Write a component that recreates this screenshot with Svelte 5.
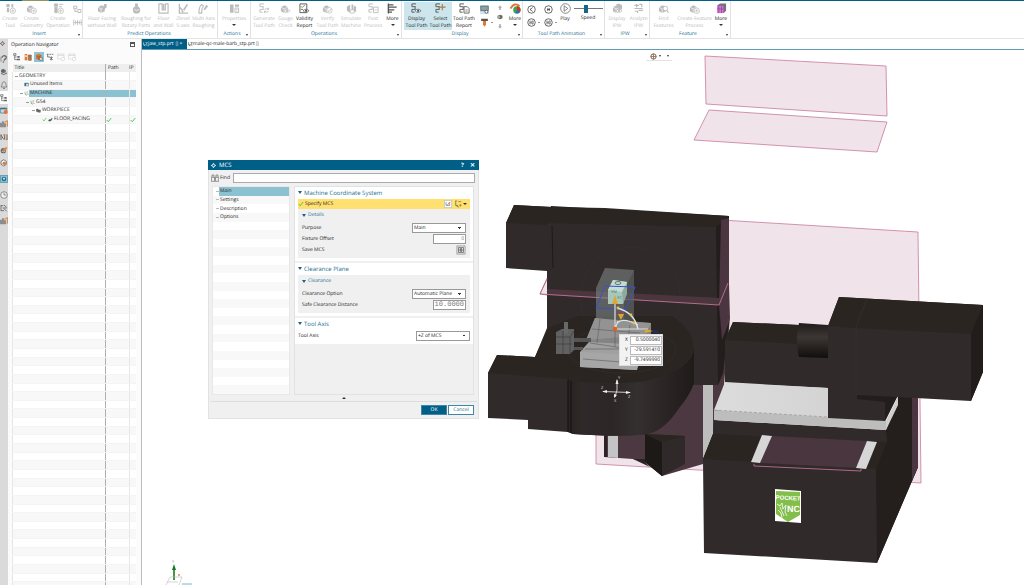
<script>
  const cube = '<path d="M2 9l8-4 7 4v9l-8 4-7-4z" fill="currentColor"/><path d="M2 9l7 4 8-4M9 13v9" fill="none" stroke="#fff" stroke-width="1.4"/>';
  const plus = '<circle cx="17" cy="17" r="6" fill="#fff" stroke="currentColor" stroke-width="1.6"/><path d="M13.500 17h7M17 13.500v7" stroke="currentColor" stroke-width="1.6"/>';
  const path = '<path d="M2 2h9M2 8h8M2 14h8M2 20h6M2 2v6M9 8v6M2 14v6" fill="none" stroke="currentColor" stroke-width="2"/>';
  const eye = '<path d="M9 17q6-7 13 0q-7 7-13 0z" fill="#fff" stroke="currentColor" stroke-width="1.600"/><circle cx="15.500" cy="17" r="2.500" fill="currentColor"/>';

  const icons = {
    tool: '<path d="M3 2h7v7H3zM4 11h5v9H4zM14 2h4v8h-4z" fill="currentColor"/>' + plus,
    geometry: cube + plus,
    operation: '<path d="M3 2h7v5H3zM4 9h5v12H4zM13 3h9M13 8h6" fill="currentColor" stroke="currentColor" stroke-width="2"/>' + plus,
    face: cube + '<path d="M12 12l4-10h5v8l-6 4z" fill="currentColor"/>',
    rough: '<path d="M9 1h6v8H9z" fill="currentColor"/><circle cx="12" cy="15" r="8" fill="currentColor"/><path d="M7 14q5 5 10 0" stroke="#fff" stroke-width="1.500" fill="none"/>',
    wall: '<path d="M2 2v20h20V2h-6v13H9V2z" fill="none" stroke="currentColor" stroke-width="2.500"/><path d="M10 2h4v12h-4z" fill="currentColor"/>',
    zlevel: '<path d="M3 2v20h19M3 9q5 3 8 11" fill="none" stroke="currentColor" stroke-width="3"/><path d="M11 14L19 2l3 2-8 13z" fill="currentColor"/>',
    multi: '<path d="M2 22q0-14 6-19l4 3q-5 7-4 16z" fill="none" stroke="currentColor" stroke-width="2.500"/><path d="M12 14l6-10 4 3-7 9z" fill="currentColor"/>',
    props: '<path d="M2 3h8v18H2zM13 3h9v5h-9z" fill="currentColor"/><path d="M13 11h8v10h-8z" fill="#fff" stroke="currentColor" stroke-width="2"/><path d="M15 14h4M15 18h4" stroke="currentColor" stroke-width="1.500"/>',
    generate: path + '<path d="M12 14q5-5 9 0M21 18q-5 5-9 0M21 10v4h-4M12 22v-4h4" fill="none" stroke="currentColor" stroke-width="1.800"/>',
    gouge: cube + eye,
    validity: '<path d="M2 2h15v19H2z" fill="#fff" stroke="currentColor" stroke-width="2"/><path d="M4 7l3 3 6-6" fill="none" stroke="#3aa655" stroke-width="2"/><path d="M4 14h5" stroke="#d03c3c" stroke-width="2"/>' + eye,
    verify: cube + '<circle cx="16" cy="16" r="6" fill="#fff" stroke="currentColor" stroke-width="1.600"/><path d="M13 16l2 3 5-6" fill="none" stroke="currentColor" stroke-width="1.800"/>',
    simulate: '<path d="M2 8l7-5v18l-7-4zM12 3h4v12h-4zM17 7h5v12h-5z" fill="currentColor"/><path d="M9 15h9v7H9z" fill="#fff" stroke="currentColor" stroke-width="1.600"/>',
    post: path + '<path d="M12 9h10v12H12z" fill="#fff" stroke="currentColor" stroke-width="2"/><path d="M14 15h6" stroke="currentColor" stroke-width="1.500"/>',
    list: '<path d="M3 1v22M3 4h11M3 9h18M3 15h13M3 20h8" fill="none" stroke="currentColor" stroke-width="3"/>',
    display: path + eye,
    select: path + '<path d="M16 2v14M9 9h14" stroke="#b07a46" stroke-width="2.400"/>',
    report: path + '<path d="M11 8h7l4 4v10H11z" fill="#fff" stroke="currentColor" stroke-width="1.800"/><path d="M14 15h5M14 18h5" stroke="currentColor" stroke-width="1.200"/>',
    color: '<path d="M1 12q9-15 20-5" fill="none" stroke="#e0762f" stroke-width="4"/><circle cx="15" cy="15" r="8" fill="#34a853"/><path d="M15 15V7a8 8 0 0 1 7 12z" fill="#d93025"/><path d="M15 15l7 4a8 8 0 0 1-10 3z" fill="#3067c8"/>',
    prev: '<circle cx="12" cy="12" r="10" fill="#fff" stroke="currentColor" stroke-width="1.800"/><path d="M15 7l-7 5 7 5" fill="none" stroke="currentColor" stroke-width="1.800"/>',
    stop: '<circle cx="12" cy="12" r="10" fill="#fff" stroke="currentColor" stroke-width="1.800"/><path d="M10 8v8M14 8v8M8 12h8" fill="none" stroke="currentColor" stroke-width="1.600"/>',
    first: '<circle cx="12" cy="12" r="10" fill="#fff" stroke="currentColor" stroke-width="1.800"/><path d="M8 7v10M16 7v10M15 8l-5 4 5 4" fill="none" stroke="currentColor" stroke-width="1.800"/>',
    play: '<circle cx="12" cy="12" r="10.500" fill="#fff" stroke="currentColor" stroke-width="1.500"/><path d="M9 6l8 6-8 6z" fill="none" stroke="currentColor" stroke-width="1.500"/>',
    ipw: cube + '<path d="M9 3l6-2 7 4v8l-5 3z" fill="currentColor"/>' + eye,
    analyze: '<path d="M3 5h10M8 2v8M3 12h18M12 16h10M14 3h5v6M4 18h6v4" fill="none" stroke="currentColor" stroke-width="2.600"/>',
    find: cube + '<circle cx="16" cy="12" r="5" fill="#fff" stroke="currentColor" stroke-width="2"/><path d="M19 16l4 5" stroke="currentColor" stroke-width="2.500"/>',
    feature: '<path d="M3 5l6-4h13v16l-5 5H3z" fill="#77717a"/><path d="M3 6h13v16H3z" fill="#e36be3"/><path d="M6 6v16M12 6v16M3 13h13" stroke="#7b4d86" stroke-width="1.500"/>',
    mini: '<path d="M2 3h8v7H2zM5 10v7h6M13 12h8v8h-8z" fill="none" stroke="currentColor" stroke-width="2.600"/>',
    ruler: '<path d="M2 4v16M22 4v16M2 12h20M7 7v10M12 5v14M17 7v10" stroke="currentColor" stroke-width="2.200"/>',
    screen: '<path d="M2 3h20v12H2z" fill="#7ba7b8" stroke="#50616b" stroke-width="2"/><path d="M6 8h11" stroke="#e88a32" stroke-width="3"/><circle cx="17" cy="18" r="4" fill="#fff" stroke="#444" stroke-width="2"/>',
    drill: '<path d="M3 2h18v6H3z" fill="#555"/><path d="M8 8h8v10l-4 5-4-5z" fill="#e07c2f"/>',
    up: '<path d="M12 2l8 9h-5v9H9v-9H4z" fill="#aaa"/>',
    box: '<path d="M2 7l12-4 8 4v10l-10 4-10-4z" fill="#6a6a60"/><path d="M4 9h8v6H4z" fill="#b9c4a5"/>',
    down: '<path d="M12 22l8-9h-5V4H9v9H4z" fill="#aaa"/>',
    gear: '<circle cx="12" cy="12" r="7" fill="none" stroke="currentColor" stroke-width="4"/><path d="M12 1v5M12 18v5M1 12h5M18 12h5" stroke="currentColor" stroke-width="4"/>',
    help: '<path d="M6 8q1-6 7-6 8 2 5 8-5 3-6 7" fill="none" stroke="currentColor" stroke-width="4"/><circle cx="10" cy="21" r="2.500" fill="currentColor"/><path d="M3 5v15" stroke="currentColor" stroke-width="2"/>',
    parts: '<path d="M9 2l8 4v7l-8 3-6-4V6z" fill="currentColor"/><path d="M3 16q7 8 18-1" fill="none" stroke="currentColor" stroke-width="3"/>',
    bell: '<path d="M3 18q3-2 3-9 1-6 6-7 5 1 6 7 0 7 3 9z" fill="none" stroke="currentColor" stroke-width="2"/><path d="M9 20h6v3H9z" fill="currentColor"/>',
    tree: '<path d="M2 2h7v5H2zM5 7v13h6M5 12h6" fill="none" stroke="currentColor" stroke-width="2.200"/><path d="M13 9h7v5h-7zM11 17h10v5H11z" fill="currentColor"/>',
    orange: '<path d="M1 3h19v15H1z" fill="#c5dbe2" stroke="#3f6f85" stroke-width="2"/><path d="M1 3h19v4H1z" fill="#3f6f85"/><circle cx="17" cy="15" r="6" fill="#e8752b"/>',
    bars: '<path d="M3 8v14M9 4v18M15 10v12" stroke="currentColor" stroke-width="4"/><path d="M13 7l9-5v18" stroke="#dc7b37" stroke-width="3" fill="none"/>',
    machine: '<path d="M2 3h8v19H2z" fill="#e07a2f"/><path d="M4 7h4v5H4z" fill="#fff"/><path d="M13 6h9v5h-9zM13 13h9v9h-9z" fill="#d8702a" stroke="#555" stroke-width="1.500"/>',
    links: '<path d="M3 4v17M3 6l8 13M14 4v16M21 4v16" fill="none" stroke="currentColor" stroke-width="3"/><circle cx="13" cy="6" r="3" fill="#df7a33"/><circle cx="20" cy="19" r="3" fill="#df7a33"/>',
    part2: '<circle cx="10" cy="14" r="8" fill="currentColor"/><path d="M6 12l9-7 7-3-3 9-7 5z" fill="#e0803d"/><path d="M5 15q6 5 11 0" stroke="#eee" stroke-width="2" fill="none"/>',
    geom: '<path d="M3 6l9-4 7 5v9l-9 5-7-4z" fill="#e5742a"/><path d="M3 8l8 4 8-5M11 12v9" fill="none" stroke="#8b4a22" stroke-width="1.500"/><path d="M14 13h8v9h-8z" fill="#e9eef0" stroke="#555" stroke-width="1.800"/>',
    method: '<path d="M2 4h6M10 4h5M17 4h5M5 4v8h7M12 12l8 9M20 12l-8 9M16 10v12" fill="none" stroke="currentColor" stroke-width="2.500"/>',
    hand: '<path d="M3 7l8-5 8 5v9l-8 5-8-5z" fill="#eee" stroke="currentColor" stroke-width="2.400"/><circle cx="13" cy="13" r="5" fill="#df7a33"/>',
    globe: '<path d="M1 1h22v22H1z" fill="#8ec3d2" stroke="#3f7f98" stroke-width="2"/><circle cx="12" cy="12" r="7" fill="#1c6f92"/><path d="M9 9l5-1 1 4-4 3z" fill="#dff"/>',
    clock: '<circle cx="12" cy="12" r="10" fill="#eee" stroke="currentColor" stroke-width="2"/><path d="M12 5v7h6" fill="none" stroke="currentColor" stroke-width="2"/>',
    nodes: '<path d="M3 3v18M3 5h7M8 12h12M3 20h9M12 3l8 7M12 14l8 8" fill="none" stroke="currentColor" stroke-width="2.600"/>',
    window: '<path d="M2 3h19v15H2z" fill="none" stroke="currentColor" stroke-width="1.600"/><path d="M2 7h19" stroke="currentColor" stroke-width="2"/><circle cx="18" cy="18" r="5" fill="#fff" stroke="currentColor" stroke-width="1.600"/>',
    binoc: '<path d="M3 10V3h6v7M15 10V3h6v7M1 10h10v12H1zM13 10h10v12H13zM11 14h2" fill="none" stroke="currentColor" stroke-width="2"/>',
    csys: '<path d="M5 3v12h8" fill="none" stroke="#3aa655" stroke-width="2.600"/><path d="M5 15l9 7M12 4h8M12 9h6" stroke="#777" stroke-width="2.200"/><circle cx="19" cy="16" r="2.500" fill="#d65a3a"/>',
    file: '<path d="M3 3v13h8M3 16l8 6M12 5h9M21 5l-8 12h9" fill="none" stroke="currentColor" stroke-width="2.400"/>',
    work: '<path d="M2 5h8v12H2zM10 9h11v11H10z" fill="#777" stroke="#444" stroke-width="2"/>',
    folder: '<path d="M2 4h20v16H2z" fill="#2f6f86"/><path d="M10 8h9v10h-9z" fill="#dfeef3"/>',
    mill: '<path d="M2 14l8-4 4 2 4-9 4 2-5 12-9 5-6-3z" fill="#41615e"/>',
    check: '<path d="M3 12l6 7L21 4" fill="none" stroke="#35c94b" stroke-width="3.500"/>',
    savegrid: '<path d="M2 2h20v20H2z" fill="#ddd" stroke="#888" stroke-width="1.500"/><path d="M6 6h5v12H6zM13 6h5v12h-5zM6 12h12" fill="none" stroke="#666" stroke-width="1.800"/>',
    pick: '<path d="M1 1h22v22H1z" fill="#fff" stroke="#8aa" stroke-width="1.600"/><path d="M6 6v10h10" fill="none" stroke="#4d79a8" stroke-width="2"/><path d="M9 17l8-11v12" fill="none" stroke="#cf5a3a" stroke-width="2"/>',
    dynamic: '<path d="M5 3v13l10 6M5 16h7" fill="none" stroke="#5d8f4c" stroke-width="2.600"/><path d="M3 3h7M13 5h9" stroke="#c9822b" stroke-width="3"/><path d="M19 12v8M16 16h7" stroke="#b0762b" stroke-width="2.400"/>'
  };

  const groups = [
    { name: 'Insert', width: 83, more: true, items: [
      { w: 20, icon: 'tool', label: 'Create\nTool', off: true },
      { w: 23, icon: 'geometry', label: 'Create\nGeometry', off: true },
      { w: 30, icon: 'operation', label: 'Create\nOperation', off: true },
      { w: 9, stack: ['mini', 'ruler'], off: true } ] },
    { name: 'Predict Operations', width: 135, items: [
      { w: 38, icon: 'face', label: 'Floor Facing\nwithout Wall', off: true },
      { w: 30, icon: 'rough', label: 'Roughing for\nRotary Parts', off: true },
      { w: 25, icon: 'wall', label: 'Floor\nand Wall', off: true },
      { w: 14, icon: 'zlevel', label: 'Zlevel\n5-axis', off: true },
      { w: 27, icon: 'multi', label: 'Multi Axis\nRoughing', off: true } ] },
    { name: 'Actions', width: 33, more: true, items: [
      { w: 32, icon: 'props', label: 'Properties', off: true, drop: true } ] },
    { name: 'Operations', width: 151, more: true, items: [
      { w: 26, icon: 'generate', label: 'Generate\nTool Path', off: true },
      { w: 17, icon: 'gouge', label: 'Gouge\nCheck', off: true },
      { w: 21, icon: 'validity', label: 'Validity\nReport' },
      { w: 25, icon: 'verify', label: 'Verify\nTool Path', off: true },
      { w: 22, icon: 'simulate', label: 'Simulate\nMachine', off: true },
      { w: 22, icon: 'post', label: 'Post\nProcess', off: true },
      { w: 17, icon: 'list', label: 'More', drop: true } ] },
    { name: 'Display', width: 121, more: true, items: [
      { w: 2 },
      { w: 25, icon: 'display', label: 'Display\nTool Path', on: true },
      { w: 23, icon: 'select', label: 'Select\nTool Path', on: true },
      { w: 24, icon: 'report', label: 'Tool Path\nReport' },
      { w: 16, stack: ['screen', 'drill'] },
      { w: 16, stack: ['up', 'box', 'down'] },
      { w: 14, icon: 'color', label: 'More', drop: true } ] },
    { name: 'Tool Path Animation', width: 82, more: true, items: [
      { w: 16, stack: ['prev', 'first'] },
      { w: 18, stack: ['stop', 'first'] },
      { w: 16, icon: 'play', label: 'Play' },
      { w: 30, slider: true } ] },
    { name: 'IPW', width: 45, more: true, items: [
      { w: 24, icon: 'ipw', label: 'Display\nIPW', off: true },
      { w: 19, icon: 'analyze', label: 'Analyze\nIPW', off: true } ] },
    { name: 'Feature', width: 81, more: true, items: [
      { w: 27, icon: 'find', label: 'Find\nFeatures', off: true },
      { w: 35, icon: 'geometry', label: 'Create Feature\nProcess', off: true },
      { w: 18, icon: 'feature', label: 'More', drop: true } ] }
  ];

  const rail = ['gear', 'help', 'parts', 'bell', 'tree', 'orange', 'bars', 'links', 'part2', 'hand', 'globe', 'clock', 'nodes', 'bars'];
  const tree = [
    { name: 'GEOMETRY', level: 0, open: true },
    { name: 'Unused Items', level: 1, icon: 'folder' },
    { name: 'MACHINE', level: 1, icon: 'csys', open: true, selected: true },
    { name: 'G54', level: 2, icon: 'csys', open: true },
    { name: 'WORKPIECE', level: 3, icon: 'work', open: true },
    { name: 'FLOOR_FACING', level: 4, icon: 'mill', done: true }
  ];
  const blanks = Array.from({ length: 54 }, (_, i) => i);
  const pages = ['Main', 'Settings', 'Description', 'Options'];
  const pageBlanks = Array.from({ length: 20 }, (_, i) => i);
  let speed = $state(42);
  let query = $state('');
</script>

{#snippet icon(name)}
  <svg class="icon" viewBox="0 0 24 24" aria-hidden="true">{@html icons[name]}</svg>
{/snippet}

<div class="app">
  <div class="accent"><span></span></div>
  <header class="ribbon">
    {#each groups as group}
      <section class="group" style:width="{group.width}px">
        <div class="items">
          {#each group.items as item}
            <div class="cell" style:width="{item.w}px">
              {#if item.stack}
                <div class="stack" class:off={item.off} class:three={item.stack.length === 3}>
                  {#each item.stack as s}
                    <button aria-label={s} class:lit={s === 'screen'}>{@render icon(s)}{#if s === 'first' || s === 'drill'}<i class="tri"></i>{/if}</button>
                  {/each}
                </div>
              {:else if item.slider}
                <label class="speed">
                  <input type="range" bind:value={speed} />
                  <span>Speed</span>
                </label>
              {:else if item.icon}
                <button class="big" class:off={item.off} class:on={item.on}>
                  {@render icon(item.icon)}
                  <span>{item.label}</span>
                  {#if item.drop}<i class="tri"></i>{/if}
                </button>
              {/if}
            </div>
          {/each}
        </div>
        <div class="caption"><span>{group.name}</span>{#if group.more}<i class="tri"></i>{/if}</div>
      </section>
    {/each}
  </header>

  <div class="work">
    <nav class="rail">
      {#each rail as r, i}
        <button aria-label={r} class:active={i === 4} class:gap={i === 10 || i === 11}>{@render icon(r)}</button>
      {/each}
    </nav>

    <aside class="navigator">
      <div class="nav-title"><span>Operation Navigator</span><i class="max"></i></div>
      <div class="nav-tools">
        <button aria-label="Program order">{@render icon('tree')}</button>
        <button aria-label="Machine tool">{@render icon('machine')}</button>
        <button aria-label="Geometry" class="on">{@render icon('geom')}</button>
        <button aria-label="Method">{@render icon('method')}</button>
        <button aria-label="Find object" class="dim">{@render icon('window')}</button>
        <button aria-label="Close object" class="dim">{@render icon('window')}</button>
      </div>
      <div class="tree">
        <table>
          <thead><tr><th>Title</th><th>Path</th><th>IP</th></tr></thead>
          <tbody>
            {#each tree as row}
              <tr class:selected={row.selected}>
                <td><div class="node level{row.level}">
                  <i class:open={row.open}></i>
                  {#if row.done}{@render icon('check')}{/if}
                  {#if row.icon}{@render icon(row.icon)}{/if}<span>{row.name}</span>
                </div></td>
                <td>{#if row.done}{@render icon('check')}{/if}</td>
                <td>{#if row.done}{@render icon('check')}{/if}</td>
              </tr>
            {/each}
            {#each blanks as b (b)}<tr><td></td><td></td><td></td></tr>{/each}
          </tbody>
        </table>
      </div>
    </aside>

    <main>
      <div class="tabs">
        <a href="#jaw" class="current">{@render icon('file')}jaw_stp.prt <b>▯ ×</b></a>
        <a href="#male">{@render icon('file')}male-qc-male-barb_stp.prt ▯</a>
      </div>
      <div class="canvas">
        <svg class="scene" viewBox="142 50 882 535" preserveAspectRatio="xMinYMin meet" role="img" aria-label="Machine model">
          <defs>
            <linearGradient id="drum" x1="568" x2="694" y1="0" y2="0" gradientUnits="userSpaceOnUse">
              <stop offset="0" stop-color="#28221f" /><stop offset=".12" stop-color="#2f2929" />
              <stop offset=".35" stop-color="#2c2626" /><stop offset=".55" stop-color="#353030" />
              <stop offset=".8" stop-color="#292423" /><stop offset="1" stop-color="#1f1b19" />
            </linearGradient>
            <linearGradient id="spindle" x1="0" x2="0" y1="323" y2="358" gradientUnits="userSpaceOnUse">
              <stop offset="0" stop-color="#201c1a" /><stop offset=".4" stop-color="#3c3735" /><stop offset="1" stop-color="#100e0d" />
            </linearGradient>
            <linearGradient id="plate" x1="714" x2="828" y1="0" y2="0" gradientUnits="userSpaceOnUse">
              <stop offset="0" stop-color="#dcdcdc" /><stop offset="1" stop-color="#d4d4d4" />
            </linearGradient>
          </defs>

          <!-- reference planes -->
          <g fill="#f0e4ea" stroke="#c9799c" stroke-width=".8">
            <path d="M705 56L886 66L887 116L706 104Z" />
            <path d="M709 110L887 122L877 152L694 140Z" />
            <path d="M721 220L918 232L921 483L596 464V430Z" />
            <path d="M553 265L540 294L560 297Z" />
          </g>

          <!-- shaded column -->
          <path d="M604 425L660 380H703L722 330L727 216L730 318L724 385L714 435L703 464L662 476L645 462L633 459L604 457Z" fill="#4c3840" />
          <path d="M608 434H618V458L608 457Z" fill="#c4c4c4" />
          <path d="M604 434H607V457H604Z" fill="#2b2422" />
          <path d="M703 383H713V434L703 460Z" fill="#bdbdbd" />

          <!-- back frame -->
          <path d="M514 205L552 207L605 208L729 216V322L723 373L718 385H690L547 360V271L506 268V223Z" fill="#302a2a" />
          <path d="M514 205L552 207L547 225L506 223Z" fill="#2a2521" />
          <path d="M551 206L605 209L729 216L716 227L546 223Z" fill="#2a2521" />
          <path d="M716 227L729 216V322L723 373L718 385Z" fill="#231e1b" />
          <path d="M721 220L729 218V322L722 340L719 305Z" fill="#4b3540" />
          <path d="M552 226L553 268" stroke="#1f1b1a" />
          <circle cx="630" cy="297" r="50" fill="none" stroke="#353031" stroke-width=".7" />
          <path d="M547 289L720 298L728 283L719 305L547 295Z" fill="#4b363e" />
          <path d="M547 279L540 294L719 305L728 283" fill="none" stroke="#b56c8c" />

          <!-- rotary table -->
          <path d="M497 355L535 357L547 328V316H670Q694 332 694 353V383Q690 395 679 408Q666 428 651 433Q632 438 573 434L568 432L528 429V420L488 418V373Z" fill="#302a2a" />
          <path d="M568 379L573 381Q615 385 646 381Q694 369 694 347V383Q690 395 679 408Q666 428 651 433Q632 438 573 434L568 432Z" fill="url(#drum)" />
          <path d="M497 355L535 357L548 328L578 316H672Q696 333 693 350Q688 371 646 381Q615 385 573 381L567 379L488 373Z" fill="#2a2521" />
          <path d="M568 380V432M571 381V433" stroke="#171312" />
          <ellipse cx="622" cy="350" rx="54" ry="23" fill="none" stroke="#342e2c" stroke-width=".7" />
          <path d="M645 434L685 436V464L662 476L645 462Z" fill="#2f2929" />
          <path d="M645 434L662 442V476L645 462Z" fill="#1d1917" />
          <path d="M645 434L685 436L662 442Z" fill="#2a2521" />
          <path d="M633 459H645V462L650 467Z" fill="#2a2422" />

          <!-- cross slide and plate -->
          <path d="M733 322L799 325H828V388L725 383V340Z" fill="#302a2a" />
          <path d="M733 322L799 325L797 344L725 340Z" fill="#2a2521" />
          <path d="M714 420L886 430L898 405L907 397L918 400V467L877 563L704 553L703 459L713 434Z" fill="#302a2a" />
          <path d="M713 434L887 442L876 469L703 459Z" fill="#2a2521" />
          <path d="M886 430L898 397H912L918 399V467L877 563L876 469L887 442Z" fill="#241f1c" />
          <path d="M912 397H918V467L912 481Z" fill="#4b3540" />
          <path d="M725 382L828 388V418L714 410Z" fill="url(#plate)" />
          <path d="M714 410L886 421V430L714 420Z" fill="#bdbdbd" />
          <path d="M886 421L898 397V405L886 430Z" fill="#cfcfcf" />
          <path d="M714 410L828 417" stroke="#8d8d8d" stroke-width=".6" stroke-dasharray="3 2" />

          <!-- spindle head -->
          <path d="M839 297L983 305V372L971 401L897 397L885 421L828 418V326Z" fill="#302a2a" />
          <path d="M839 297L983 305L971 334L856 328L828 326Z" fill="#2a2521" />
          <path d="M983 305V372L971 401V334Z" fill="#221d1a" />
          <path d="M857 395L897 397L885 421V402L857 399Z" fill="#231e1b" />
          <path d="M867 299L856 327V395" fill="none" stroke="#3a3433" stroke-width=".6" />
          <path d="M799 323L828 325V358L799 357Q795 340 799 323Z" fill="url(#spindle)" />

          <!-- base rails -->
          <path d="M772 436L867 441L857 468L760 463Z" fill="#4a363e" />
          <path d="M762 435L772 436L760 463L751 462Z" fill="#d6d6d6" />
          <path d="M867 441L877 442L866 469L856 468Z" fill="#d6d6d6" />
          <path d="M754 464V466L861 471V469" fill="none" stroke="#b0688a" />

          <!-- maker's plate -->
          <path d="M775 489L801 491V523L775 521Z" fill="#fff" />
          <path d="M776 491L800 492V515L788 522L776 514Z" fill="#83bd4a" />
          <text x="788" y="500" class="logo" text-anchor="middle" transform="rotate(3 788 500)">POCKET</text>
          <text x="787" y="512" class="logo nc">NC</text>
          <path d="M777 504l3 2 2-3 1 6 3-4-1 7 2 4M778 510l3 3 1 5M780 507l4 9" fill="none" stroke="#fff" stroke-width=".8" />

          <!-- fixture and stock -->
          <path d="M605 268L634 270V326H596V288Z" fill="#7e8886" fill-opacity=".58" />
          <path d="M624 291L634 270V326H624Z" fill="#363a3a" fill-opacity=".35" />
          <path d="M595 318L620 321L651 323V345H593L586 340Z" fill="#848484" />
          <path d="M595 318L651 323L645 335L586 340Z" fill="#989898" fill-opacity=".75" />
          <path d="M580 352L589 342L645 345L637 370L580 367Z" fill="#a0a0a0" />
          <path d="M580 352L637 355V370L580 367Z" fill="#a6a6a6" />
          <path d="M585 349H625M590 343L636 350M583 359L634 363M592 329L640 333M600 319L597 343M615 320V347M630 325L624 366" fill="none" stroke="#5c5c5c" stroke-width=".6" />
          <path d="M556 332L562 329H574V350L570 354H556Z" fill="#616161" />
          <path d="M564 322H568V334H564Z" fill="#686868" />
          <path d="M574 338H591V342H574ZM574 347H583V350H574Z" fill="#555" />
          <path d="M556 337H570V354M570 337L574 331M556 344H572M563 331V354" fill="none" stroke="#3e3e3e" stroke-width=".7" />
          <path d="M613 280L627 282V292L623 304H608V290Z" fill="#a9c6bd" />
          <path d="M613 280L627 282L622 292L608 290Z" fill="#c4dcd4" />
          <path d="M622 292L627 283V294L623 304Z" fill="#8ea9a0" />
          <ellipse cx="618" cy="283" rx="3" ry="1.500" fill="none" stroke="#5c7a70" />
          <path d="M605 286L635 287L626 309L596 308Z" fill="none" stroke="#3951c6" />
          <path d="M615 329V302M615 329L618 321M615 329H648" fill="none" stroke="#ddd" stroke-width="1.200" />
          <path d="M617 308Q634 312 638 329M617 323Q623 317 638 325" fill="none" stroke="#e4e4e4" stroke-width="1.300" />
          <path d="M615 295L618 304H612ZM653 331L645 333V329ZM621 320L618 314H624Z" fill="#dba632" />
          <circle cx="615" cy="329" r="2.200" fill="#e8600e" />
          <g fill="#eec044"><circle cx="618" cy="308" r="1.400" /><circle cx="631" cy="315" r="1.400" /><circle cx="634" cy="323" r="1.400" /></g>
          <g class="mark">
            <text x="611" y="293" fill="#238a38">YM</text><text x="617" y="299" fill="#238a38">YC</text>
            <text x="617" y="314" fill="#b02a4a">XM</text><text x="653" y="333" fill="#1836c8">ZM</text>
          </g>

          <!-- orientation triads -->
          <path d="M603 391.500L630 392.500M617 380V390L615 397" fill="none" stroke="#ddd" stroke-width=".9" />
          <path d="M602 391.500l5-1.500v3zM631 392.500l-5-1.500v3zM617 379l-1.500 5h3zM614 398l0-4 3 1z" fill="#eee" />
          <g class="mark" fill="#ddd"><text x="618" y="379">Y</text><text x="601" y="389">Z</text><text x="628" y="398">Z</text><text x="614" y="402">X</text></g>
          <path d="M174 580V568" stroke="#187a20" stroke-width="1.600" />
          <path d="M174 564l-2 6h4z" fill="#187a20" />
          <path d="M166 585L170 577H182L179 585M167 582H178" fill="none" stroke="#bbb" stroke-width=".6" />
          <path d="M178 574h2v2h-2z" fill="#e8a78c" /><path d="M182 584h10" stroke="#74b9c9" />
          <text x="172" y="563" class="mark" fill="#999">Y</text>
        </svg>

        <div class="view-tools"><svg class="icon" viewBox="0 0 24 24" aria-hidden="true"><circle cx="12" cy="12" r="9" fill="#fff" stroke="#555" stroke-width="3" /><path d="M12 2v20M2 12h20" stroke="#b0653a" stroke-width="3" /></svg><i class="tri"></i><i class="tri"></i></div>

        <div class="coords">
          <label>X <input value="0.5000040" /></label>
          <label>Y <input value="-29.591410" /></label>
          <label>Z <input value="-9.7499990" /></label>
        </div>

        <section class="dialog" aria-label="MCS">
          <div class="bar">{@render icon('gear')}<span>MCS</span><button>?</button><button>✕</button></div>
          <label class="find">{@render icon('binoc')}<span>Find</span><input bind:value={query} /></label>
          <div class="body">
            <ul class="pages">
              {#each pages as page, i}<li class:selected={i === 0}><a href="#{page}">{page}</a></li>{/each}
              {#each pageBlanks as b (b)}<li></li>{/each}
            </ul>
            <div class="panes">
              <div class="card">
                <h2><i class="tri"></i>Machine Coordinate System</h2>
                <div class="specify">{@render icon('check')}<span>Specify MCS</span>
                  <button aria-label="CSYS dialog">{@render icon('pick')}</button><button aria-label="Dynamic">{@render icon('dynamic')}</button><i class="tri"></i></div>
                <div class="inset">
                  <h3><i class="tri"></i>Details</h3>
                  <label class="field"><span>Purpose</span><select><option>Main</option></select></label>
                  <label class="field"><span>Fixture Offset</span><input value="0" /></label>
                  <div class="field"><span>Save MCS</span><button aria-label="Save MCS">{@render icon('savegrid')}</button></div>
                </div>
              </div>
              <div class="card">
                <h2><i class="tri"></i>Clearance Plane</h2>
                <div class="inset">
                  <h3><i class="tri"></i>Clearance</h3>
                  <label class="field"><span>Clearance Option</span><select><option>Automatic Plane</option></select></label>
                  <label class="field"><span>Safe Clearance Distance</span><input class="mono" value="10.0000" /></label>
                </div>
              </div>
              <div class="card">
                <h2><i class="tri"></i>Tool Axis</h2>
                <label class="field"><span>Tool Axis</span><select><option>+Z of MCS</option></select></label>
              </div>
            </div>
          </div>
          <div class="fold"><i class="tri up"></i></div>
          <footer><button class="ok">OK</button><button>Cancel</button></footer>
        </section>
      </div>
    </main>
  </div>
</div>

<style>
  :global(body) { margin: 0; overflow: hidden; }
  .app { height: 100vh; display: flex; flex-direction: column; background: #fff; color: #222; font: 500 5px/7px "Open Sans", "Noto Sans", sans-serif; text-rendering: geometricPrecision; overflow: hidden; }
  .app * { box-sizing: border-box; }
  button, input, select { font: inherit; color: inherit; text-rendering: inherit; border: 0; padding: 0; margin: 0; background: none; border-radius: 0; min-width: 0; outline: none; }
  a { color: inherit; text-decoration: none; }
  .icon { width: 8px; height: 8px; display: block; flex: none; }
  .tri { width: 0; height: 0; border: 2px solid transparent; border-top-color: #333; border-bottom: 0; flex: none; }
  .tri.up { border-top: 0; border-bottom: 2px solid #333; }

  .accent { height: 1px; background: #005f87; flex: none; padding-left: 22px; }
  .accent span { display: block; width: 27px; height: 1px; background: #8a9a5b; }
  .ribbon { height: 38px; flex: none; display: flex; border-bottom: 1px solid #e4e4e4; }
  .group { flex: none; border-right: 1px solid #e2e2e2; display: flex; flex-direction: column; }
  .items { display: flex; height: 29px; padding-top: 1px; }
  .cell { flex: none; display: flex; justify-content: center; }
  .big { width: 100%; display: flex; flex-direction: column; align-items: center; text-align: center; white-space: pre; padding-top: 1px; }
  .big .icon { width: 11px; height: 11px; margin-bottom: 2px; color: #555; }
  .big .tri { margin-top: 1px; }
  .big.on { background: #cde5ec; }
  .off, .big.off .icon { color: #bcbcbc; }
  .stack { display: flex; flex-direction: column; gap: 4px; padding-top: 3px; }
  .stack.three { gap: 3px; }
  .stack button { position: relative; }
  .stack .icon { width: 9px; height: 9px; }
  .stack.three .icon { width: 6px; height: 6px; }
  .stack .tri { position: absolute; right: -4px; top: 4px; border-width: 1px; border-bottom: 0; }
  .lit { background: #cde5ec; }
  .speed { display: flex; flex-direction: column; align-items: center; gap: 2px; padding-top: 2px; }
  .speed input { appearance: none; width: 29px; height: 9px; background: linear-gradient(#777, #777) center / 100% 1px no-repeat; }
  .speed input::-webkit-slider-thumb { appearance: none; width: 4px; height: 8px; background: #1a6486; }
  .caption { display: flex; align-items: center; color: #1a6f93; padding: 1px 2px 0 0; }
  .caption span { flex: 1; text-align: center; }
  .caption .tri { border-width: 1px; border-bottom: 0; border-top: 2px solid #333; }

  .work { flex: 1; min-height: 0; display: flex; }
  .rail { width: 8px; flex: none; background: #dadada; display: flex; flex-direction: column; color: #666; }
  .rail button { height: 13px; display: flex; align-items: center; flex: none; }
  .rail button:first-child .icon { width: 5px; height: 5px; margin-bottom: 4px; }
  .rail .active { background: #fff; }
  .rail .gap { margin-top: 3px; }

  .navigator { width: 134px; flex: none; display: flex; flex-direction: column; border-right: 1px solid #bdbdbd; background: #fbfbfb; padding: 0 5px 0 4px; }
  .nav-title { display: flex; justify-content: space-between; align-items: center; height: 11px; margin-left: -1px; line-height: 8px; }
  .max { width: 5px; height: 5px; border: 1px solid #555; border-top-width: 2px; margin-right: 1px; }
  .nav-tools { display: flex; gap: 1px; height: 14px; align-items: center; color: #666; }
  .nav-tools button { width: 10px; height: 10px; display: grid; place-items: center; }
  .nav-tools .on { background: #8fc4d4; }
  .nav-tools .dim { color: #ccc; }
  .tree { flex: 1; min-height: 0; overflow: hidden; }
  table { width: 100%; height: calc(100% + 6px); border-collapse: collapse; table-layout: fixed; background: #fff; }
  th { text-align: left; font-weight: 500; height: 8px; background: #eee; padding: 0 0 0 2px; line-height: 7px; }
  th:nth-child(1) { width: 93px; }
  th:nth-child(3) { width: 7px; padding: 0; overflow: hidden; }
  tbody tr { height: 8px; }
  td { padding: 0; line-height: 7px; border-left: 1px solid #e6e6e6; border-bottom: 1px solid #f4f4f4; }
  td:nth-child(2), th:nth-child(2) { border-left: 1px solid #b0b0b0; }
  td .icon { width: 6px; height: 6px; }
  tbody tr:nth-child(even) { background: #f8f8f8; }
  tbody tr.selected { background: linear-gradient(90deg, #fff 16px, #8cc1d1 16px); }
  .node { display: flex; align-items: center; padding-left: 2px; }
  .node i { width: 3px; height: 1px; margin-right: 1px; }
  .node i.open { background: #999; }
  .node .icon { width: 5px; height: 5px; margin-right: 1px; }
  .level1 { padding-left: 7px; }
  .level2 { padding-left: 13px; }
  .level3 { padding-left: 19px; }
  .level4 { padding-left: 25px; }

  main { flex: 1; min-width: 0; display: flex; flex-direction: column; }
  .tabs { height: 11px; flex: none; display: flex; border-bottom: 1px solid #5f9db5; white-space: nowrap; line-height: 8px; }
  .tabs a { display: flex; align-items: center; padding: 0 1px; }
  .tabs .icon { width: 5px; height: 6px; }
  .tabs .current { background: #005f87; color: #fff; width: 45px; }
  .tabs b { font-weight: 400; margin-left: 2px; }
  .canvas { flex: 1; min-height: 0; position: relative; overflow: hidden; line-height: 8px; }
  .scene { width: 100%; height: 100%; display: block; }
  .logo { font: 700 6px "Liberation Sans Narrow", "Liberation Sans", sans-serif; fill: #fff; }
  .nc { font-size: 9px; }
  .mark { font: 4px "Open Sans", sans-serif; }
  .view-tools { position: absolute; left: 504px; top: 2px; width: 26px; height: 9px; border-bottom: 1px solid #e2e2e2; display: flex; align-items: center; gap: 2px; padding-left: 4px; }
  .view-tools .tri { border-width: 1px; border-top: 2px solid #333; border-bottom: 0; }
  .view-tools .tri:last-child { margin-left: 4px; }
  .view-tools .icon { width: 7px; height: 7px; }
  .coords { position: absolute; left: 477px; top: 284px; width: 44px; background: #f2f2f2; border: 1px solid #ddd; display: flex; flex-direction: column; }
  .coords label { display: flex; align-items: center; height: 10px; gap: 2px; padding-left: 5px; }
  .coords input { flex: 1; width: 0; height: 9px; border: 1px solid #bbb; background: #fff; text-align: right; padding-right: 1px; }

  .dialog { position: absolute; left: 66px; top: 110px; width: 271px; background: #f0f0f0; border: 1px solid #e2e2e2; border-top: 0; }
  .bar { height: 10px; margin: 0 -1px; background: #005f87; color: #fff; display: flex; align-items: center; gap: 3px; padding: 0 3px; font-size: 6px; }
  .bar .icon { width: 5px; height: 5px; }
  .bar span { flex: 1; }
  .bar button { width: 7px; font-weight: 700; }
  .find { display: flex; align-items: center; height: 16px; padding: 0 3px 0 2px; }
  .find .icon { color: #666; margin-right: 1px; }
  .find input { flex: 1; height: 10px; margin-left: 3px; padding-left: 3px; border: 1px solid #aaa; background: #fff; }
  .body { display: flex; height: 209px; padding: 0 4px 0 3px; gap: 4px; }
  .pages { width: 78px; margin: 0; padding: 0; list-style: none; display: flex; flex-direction: column; background: #fff; border: 1px solid #e8e8e8; }
  .pages li { flex: 1; display: flex; align-items: center; padding-left: 3px; }
  .pages li:nth-child(even) { background: #f8f8f8; }
  .pages li a { padding: 0 0 0 1px; margin-left: 1px; flex: 1; }
  .pages li.selected a { background: #8cc1d1; align-self: stretch; }
  .pages li:has(a)::before { content: ""; width: 2px; border-top: 1px dotted #bbb; }
  .panes { flex: 1; border: 1px solid #e2e2e2; display: flex; flex-direction: column; gap: 2px; }
  .card { background: #fff; padding: 0 3px 3px; }
  h2, h3 { margin: 0; font-weight: 500; display: flex; align-items: center; color: #1a6f93; padding-bottom: 1px; }
  h2 { font-size: 6px; height: 12px; gap: 2px; }
  h3 { font-size: 5px; height: 13px; gap: 2px; }
  h2 .tri, h3 .tri { border-top: 3px solid #1a6486; }
  .specify { height: 10px; background: #ffe070; display: flex; align-items: center; padding-right: 3px; }
  .specify > .icon { width: 6px; height: 6px; margin-right: 1px; }
  .specify span { flex: 1; }
  .specify button { width: 10px; display: grid; place-items: center; }
  .inset { background: #f0f0f0; padding: 0 4px 3px 4px; }
  .field { display: flex; align-items: center; justify-content: space-between; height: 11px; }
  .field select { appearance: none; width: 54px; height: 10px; border: 1px solid #999; padding-left: 1px; background: linear-gradient(to bottom left, #333 50%, transparent 0) right 5px center / 2px 2px no-repeat, linear-gradient(to bottom right, #333 50%, transparent 0) right 3px center / 2px 2px no-repeat, #fff; }
  .field input { width: 33px; height: 10px; border: 1px solid #999; background: #fff; text-align: right; padding-right: 1px; color: #777; }
  .field input.mono { font: 7px "Liberation Mono", monospace; }
  .field button .icon { width: 10px; height: 10px; }
  .fold { height: 7px; margin: 0 1px; border-bottom: 1px solid #ddd; display: flex; justify-content: center; align-items: center; }
  footer { display: flex; justify-content: flex-end; gap: 1px; padding: 3px 4px 3px 0; }
  footer button { width: 26px; height: 10px; border: 1px solid #3f86a3; background: #fff; color: #1a6f93; line-height: 8px; }
  footer .ok { background: #005f87; color: #fff; }
</style>
